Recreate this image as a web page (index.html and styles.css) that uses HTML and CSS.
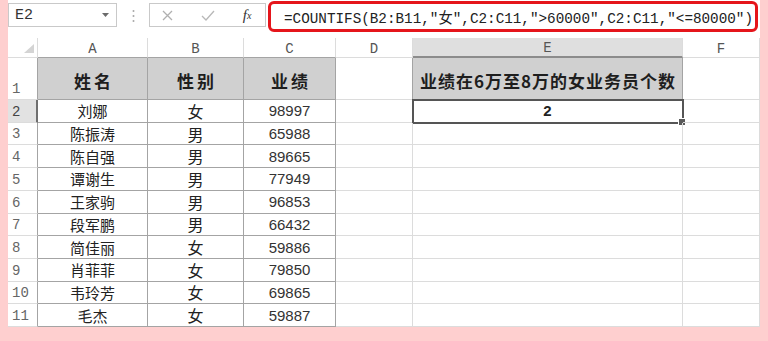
FILE: index.html
```html
<!DOCTYPE html>
<html lang="zh-CN">
<head>
    <meta charset="UTF-8">
    <meta name="viewport" content="width=device-width, initial-scale=1.0">
    <title>COUNTIFS</title>
    <link rel="stylesheet" href="styles.css">
</head>
<body>
    <div class="page">
        <div class="toolbar">
            <div class="namebox">
                <span>E2</span>
                <svg class="arrow" width="7" height="4" viewBox="0 0 7 4"><polygon points="0,0 7,0 3.5,4" fill="#6b6b6b"/></svg>
            </div>
            <div class="dots">
                <svg width="3" height="14" viewBox="0 0 3 14"><circle cx="1.5" cy="2" r="1" fill="#a8a8a8"/><circle cx="1.5" cy="7" r="1" fill="#a8a8a8"/><circle cx="1.5" cy="12" r="1" fill="#a8a8a8"/></svg>
            </div>
            <div class="buttons">
                <span class="btn btn-cancel">
                    <svg width="11" height="11" viewBox="0 0 11 11"><path d="M1 1L10 10M10 1L1 10" stroke="#b0b0b0" stroke-width="1.3" fill="none"/></svg>
                </span>
                <span class="btn btn-enter">
                    <svg width="14" height="11" viewBox="0 0 14 11"><path d="M1 6L5 10L13 1" stroke="#b8b8b8" stroke-width="1.3" fill="none"/></svg>
                </span>
                <span class="btn btn-fx">f<sub>x</sub></span>
            </div>
            <div class="formula">=COUNTIFS(B2:B11,"女",C2:C11,"&gt;60000",C2:C11,"&lt;=80000")</div>
        </div>

        <div class="grid" id="grid"></div>
    </div>

    <script>
        const columns = ['A', 'B', 'C', 'D', 'E', 'F'];

        const people = [
            ['刘娜', '女', '98997'],
            ['陈振涛', '男', '65988'],
            ['陈自强', '男', '89665'],
            ['谭谢生', '男', '77949'],
            ['王家驹', '男', '96853'],
            ['段军鹏', '男', '66432'],
            ['简佳丽', '女', '59886'],
            ['肖菲菲', '女', '79850'],
            ['韦玲芳', '女', '69865'],
            ['毛杰', '女', '59887']
        ];

        const grid = document.getElementById('grid');

        function addCell(className, text) {
            const cell = document.createElement('div');
            cell.className = 'cell ' + className;
            if (text !== undefined) cell.textContent = text;
            grid.appendChild(cell);
            return cell;
        }

        // column headers
        const corner = addCell('corner');
        corner.innerHTML = '<svg width="10" height="9" viewBox="0 0 10 9"><polygon points="10,0 10,9 0,9" fill="#d4d4d4"/></svg>';
        columns.forEach(col => {
            let cls = 'col-head';
            if (col <= 'C') cls += ' col-table';
            if (col === 'E') cls += ' col-active';
            addCell(cls, col);
        });

        // row 1: titles
        addCell('row-head row-table', '1');
        addCell('t title', '姓名');
        addCell('t title', '性别');
        addCell('t title', '业绩');
        addCell('d-edge');
        addCell('title title-wide', '业绩在6万至8万的女业务员个数');
        addCell('');

        // rows 2-11: data
        people.forEach((p, i) => {
            const rowNum = i + 2;
            addCell('row-head row-table' + (rowNum === 2 ? ' row-active' : ''), String(rowNum));
            addCell('t name', p[0]);
            addCell('t sex', p[1]);
            addCell('t num', p[2]);
            addCell(rowNum === 2 ? 'd-edge' : '');
            if (rowNum === 2) {
                addCell('result selected', '2');
            } else {
                addCell('');
            }
            addCell('');
        });
    </script>
</body>
</html>
```

FILE: styles.css
```css
* {
    margin: 0;
    padding: 0;
    box-sizing: border-box;
}

body {
    background: #fecfcf;
    font-family: "Noto Sans CJK SC", sans-serif;
    width: 768px;
    height: 341px;
    overflow: hidden;
}

.page {
    margin-left: 8px;
    width: 752px;
    height: 327px;
    background: #ffffff;
}

/* formula bar */

.toolbar {
    display: flex;
    align-items: flex-start;
    height: 38px;
}

.namebox {
    display: flex;
    align-items: center;
    justify-content: space-between;
    width: 109px;
    height: 24px;
    margin-top: 3px;
    padding: 0 7px 0 6px;
    border: 1px solid #c9c9c9;
    font-family: "Liberation Mono", monospace;
    font-size: 15px;
    color: #333;
}

.dots {
    display: flex;
    justify-content: center;
    width: 32px;
    padding-top: 9px;
}

.buttons {
    display: flex;
    align-items: center;
    width: 117px;
    height: 24px;
    margin-top: 3px;
    border: 1px solid #c9c9c9;
}

.btn {
    display: flex;
    align-items: center;
    justify-content: center;
    height: 100%;
}

.btn-cancel {
    width: 36px;
}

.btn-enter {
    width: 44px;
}

.btn-fx {
    width: 36px;
    font-family: "Liberation Serif", serif;
    font-style: italic;
    font-size: 15px;
    color: #333;
}

.btn-fx sub {
    font-size: 10px;
    vertical-align: -1px;
}

.formula {
    display: flex;
    align-items: center;
    width: 490px;
    height: 31px;
    margin: 1px 0 0 2px;
    padding-left: 13px;
    border: 3px solid #e5151b;
    border-radius: 6px;
    font-family: "Liberation Mono", "Noto Sans CJK SC", monospace;
    font-size: 14.3px;
    color: #222;
    white-space: nowrap;
}

/* sheet */

.grid {
    display: grid;
    grid-template-columns: 30px 110px 96px 92px 77px 270px 77px;
    grid-template-rows: 20px 42px repeat(10, minmax(0, 1fr));
    height: 289px;
}

.cell {
    position: relative;
    display: flex;
    align-items: center;
    justify-content: center;
    min-height: 0;
    line-height: 1;
    border-right: 1px solid #dcdcdc;
    border-bottom: 1px solid #dcdcdc;
    white-space: nowrap;
    color: #222;
}

.corner {
    align-items: flex-end;
    justify-content: flex-end;
    padding: 0 3px 4px 0;
}

.col-head {
    font-family: "Liberation Mono", monospace;
    font-size: 14px;
    color: #555;
    padding-top: 2px;
}

.col-table {
    border-bottom-color: #a4a4a4;
}

.col-active {
    background: #dfdfdf;
    border-bottom: 2px solid #8c8c8c;
}

.row-head {
    justify-content: flex-start;
    align-items: flex-end;
    padding: 0 0 3px 4px;
    font-family: "Liberation Mono", monospace;
    font-size: 14px;
    color: #666;
}

.row-table {
    border-right-color: #a4a4a4;
}

.row-active {
    background: #e2e2e2;
    border-right: 2px solid #6f6f6f;
    color: #444;
}

.t {
    border-right-color: #a4a4a4;
    border-bottom-color: #a4a4a4;
}

.d-edge {
    border-right-color: #a4a4a4;
}

.title {
    background: #d0d0d0;
    font-weight: bold;
    font-size: 17px;
    letter-spacing: 3px;
    padding: 3px 0 0 3px;
    color: #1e1e1e;
}

.title-wide {
    letter-spacing: 1px;
    padding-left: 1px;
    border-bottom-color: #a4a4a4;
    border-right-color: #a4a4a4;
}

.name {
    font-size: 15px;
}

.sex {
    font-size: 16px;
}

.num {
    font-family: "Liberation Sans", sans-serif;
    font-size: 15px;
    color: #333;
}

.result {
    font-family: "Liberation Sans", sans-serif;
    font-weight: bold;
    font-size: 15px;
    color: #222;
}

.selected {
    outline: 2px solid #555555;
    outline-offset: -1px;
}

.selected::after {
    content: "";
    position: absolute;
    right: -4px;
    bottom: -4px;
    width: 6px;
    height: 6px;
    background: #5a5a5a;
    border: 1px solid #ffffff;
}
```
